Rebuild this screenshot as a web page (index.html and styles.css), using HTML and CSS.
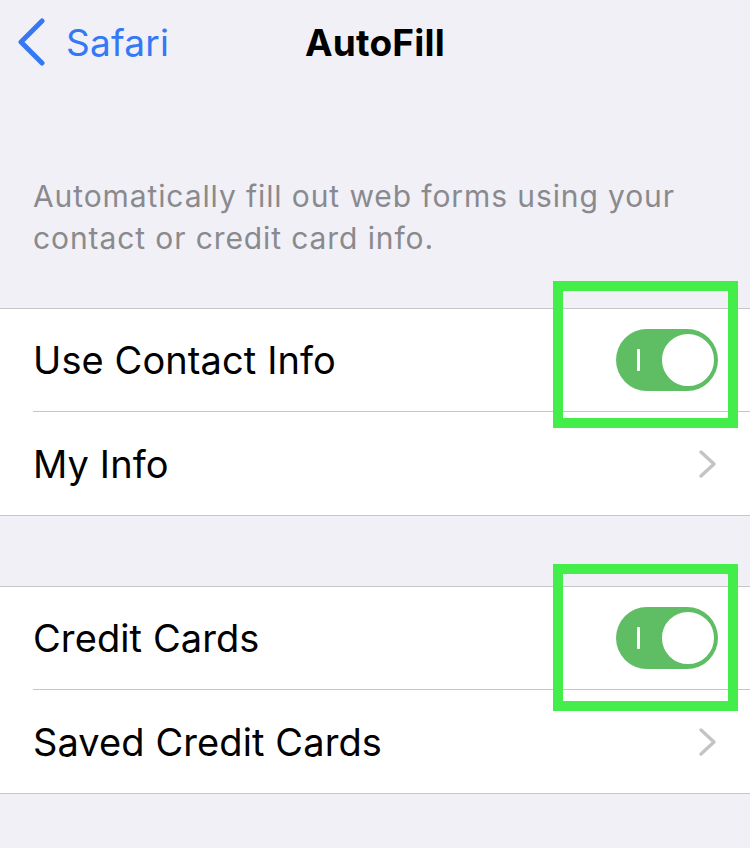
FILE: index.html
```html
<!DOCTYPE html>
<html>
<head>
<meta charset="utf-8">
<link rel="stylesheet" href="styles.css">
</head>
<body>
<div class="screen">
  <header class="nav">
    <div class="back">
      <svg class="back-chev" width="32" height="48" viewBox="0 0 32 48"><polyline points="26,3 5,24 26,45" fill="none" stroke="#3478f6" stroke-width="5" stroke-linecap="round" stroke-linejoin="round"/></svg>
      <span class="back-label">Safari</span>
    </div>
    <h1 class="title">AutoFill</h1>
  </header>

  <p class="desc">Automatically fill out web forms using your contact or credit card info.</p>

  <section class="group">
    <div class="row">
      <div class="row-inner">
        <span class="label">Use Contact Info</span>
        <span class="toggle"><span class="on-mark"></span><span class="knob"></span></span>
      </div>
    </div>
    <div class="row">
      <div class="row-inner last">
        <span class="label">My Info</span>
        <svg class="chev" width="20" height="30" viewBox="0 0 20 30"><polyline points="3,3 16,15 3,27" fill="none" stroke="#c4c4c7" stroke-width="3.4" stroke-linecap="round" stroke-linejoin="round"/></svg>
      </div>
    </div>
  </section>

  <section class="group second">
    <div class="row">
      <div class="row-inner">
        <span class="label">Credit Cards</span>
        <span class="toggle"><span class="on-mark"></span><span class="knob"></span></span>
      </div>
    </div>
    <div class="row">
      <div class="row-inner last">
        <span class="label">Saved Credit Cards</span>
        <svg class="chev" width="20" height="30" viewBox="0 0 20 30"><polyline points="3,3 16,15 3,27" fill="none" stroke="#c4c4c7" stroke-width="3.4" stroke-linecap="round" stroke-linejoin="round"/></svg>
      </div>
    </div>
  </section>

  <div class="highlight hl-1"></div>
  <div class="highlight hl-2"></div>
</div>
</body>
</html>
```

FILE: styles.css
```css
html, body {
  margin: 0;
  padding: 0;
  background: #f1f0f6;
}
.screen {
  position: relative;
  width: 750px;
  height: 848px;
  overflow: hidden;
  font-family: Inter, "Liberation Sans", sans-serif;
  color: #000;
}
.nav {
  position: relative;
  height: 86px;
  display: flex;
  align-items: center;
  justify-content: center;
}
.back {
  position: absolute;
  left: 16px;
  top: 18px;
  display: flex;
  align-items: center;
  gap: 18px;
}
.back-chev {
  display: block;
}
.back-label {
  font-size: 37px;
  color: #3478f6;
  letter-spacing: 0.2px;
}
.title {
  margin: 0;
  font-size: 37px;
  font-weight: 700;
  letter-spacing: 0.2px;
  position: relative;
  top: -1px;
}
.desc {
  margin: 0;
  padding: 89px 60px 49px 33px;
  font-size: 30px;
  line-height: 42px;
  color: #8a8a8e;
  letter-spacing: 0.9px;
}
.group {
  background: #fff;
  border-top: 1px solid #c6c6c8;
  border-bottom: 1px solid #c6c6c8;
}
.group.second {
  margin-top: 70px;
}
.row {
  padding-left: 33px;
}
.row-inner {
  height: 102px;
  display: flex;
  align-items: center;
  justify-content: space-between;
  padding-right: 32px;
  border-bottom: 1px solid #c6c6c8;
}
.row-inner.last {
  border-bottom: none;
  height: 103px;
}
.label {
  font-size: 38px;
  letter-spacing: 0.1px;
}
.chev {
  display: block;
}
.toggle {
  position: relative;
  width: 102px;
  height: 62px;
  border-radius: 31px;
  background: #5fbd63;
  display: block;
}
.on-mark {
  position: absolute;
  left: 21px;
  top: 20px;
  width: 3px;
  height: 22px;
  background: #fff;
  border-radius: 1px;
}
.knob {
  position: absolute;
  top: 2px;
  right: 1px;
  width: 52px;
  height: 52px;
  border-radius: 50%;
  background: #fff;
  border: 3px solid #5fbd63;
}
.highlight {
  position: absolute;
  left: 553px;
  width: 165px;
  height: 127px;
  border: 10px solid #44ee4a;
}
.hl-1 { top: 281px; }
.hl-2 { top: 564px; }
```
